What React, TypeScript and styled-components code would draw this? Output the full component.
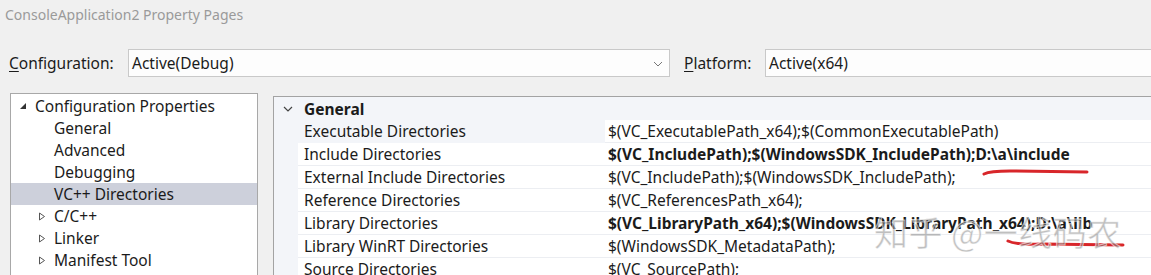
import React from "react";
import styled, { createGlobalStyle } from "styled-components";

type Prop = { name: string; value: string; bold?: boolean; plain?: boolean };

const treeItems = [
  { label: "General" },
  { label: "Advanced" },
  { label: "Debugging" },
  { label: "VC++ Directories", selected: true },
  { label: "C/C++", collapsed: true },
  { label: "Linker", collapsed: true },
  { label: "Manifest Tool", collapsed: true },
];

const props: Prop[] = [
  { name: "Executable Directories", value: "$(VC_ExecutablePath_x64);$(CommonExecutablePath)", plain: true },
  { name: "Include Directories", value: "$(VC_IncludePath);$(WindowsSDK_IncludePath);D:\\a\\include", bold: true },
  { name: "External Include Directories", value: "$(VC_IncludePath);$(WindowsSDK_IncludePath);" },
  { name: "Reference Directories", value: "$(VC_ReferencesPath_x64);" },
  { name: "Library Directories", value: "$(VC_LibraryPath_x64);$(WindowsSDK_LibraryPath_x64);D:\\a\\lib", bold: true },
  { name: "Library WinRT Directories", value: "$(WindowsSDK_MetadataPath);" },
  { name: "Source Directories", value: "$(VC_SourcePath);" },
];

const App = () => {
  return (
    <Window>
      <GlobalStyle />
      <Title>ConsoleApplication2 Property Pages</Title>

      <ConfigBar>
        <Label width={119}>
          <u>C</u>onfiguration:
        </Label>
        <Combo width={542}>
          Active(Debug)
          <ComboArrow viewBox="0 0 10 6">
            <polyline points="1,1 5,5 9,1" />
          </ComboArrow>
        </Combo>
        <Label width={81} style={{ marginLeft: 14 }}>
          <u>P</u>latform:
        </Label>
        <Combo width={400}>Active(x64)</Combo>
      </ConfigBar>

      <Body>
        <Tree>
          <TreeRow>
            <Twisty>
              <svg width="8" height="8" viewBox="0 0 8 8">
                <polygon points="7,1 7,7 1,7" fill="#333" />
              </svg>
            </Twisty>
            Configuration Properties
          </TreeRow>
          {treeItems.map((item) => (
            <TreeRow key={item.label} selected={item.selected} indent={19}>
              <Twisty>
                {item.collapsed && (
                  <svg width="8" height="9" viewBox="0 0 8 9">
                    <polygon points="1.5,1 6.5,4.5 1.5,8" fill="none" stroke="#555" strokeWidth="1" />
                  </svg>
                )}
              </Twisty>
              {item.label}
            </TreeRow>
          ))}
        </Tree>

        <Grid>
          <GroupHeader>
            <Chevron viewBox="0 0 10 6">
              <polyline points="1,1 5,5 9,1" />
            </Chevron>
            General
          </GroupHeader>
          {props.map((p) => (
            <PropRow key={p.name}>
              <NameCell plain={p.plain}>{p.name}</NameCell>
              <ValueCell bold={p.bold}>{p.value}</ValueCell>
            </PropRow>
          ))}
        </Grid>
      </Body>

      <Marks width="1151" height="275" viewBox="0 0 1151 275">
        <path d="M984 174 Q990 171 1010 171 L1087 172" stroke="#d8262a" strokeWidth="3" fill="none" strokeLinecap="round" />
        <path d="M1008 241 Q1016 245 1040 244 L1123 245" stroke="#d8262a" strokeWidth="3" fill="none" strokeLinecap="round" />
      </Marks>
      <Watermark>知乎 @一线码农</Watermark>
    </Window>
  );
};

// styles

const GlobalStyle = createGlobalStyle`
  body {
    margin: 0;
    background: #f0f0f0;
    font-family: "Noto Sans", "Noto Sans CJK SC", sans-serif;
  }
`;

const Window = styled.div`
  position: relative;
  width: 1151px;
  height: 275px;
  overflow: hidden;
  background: #f0f0f0;
  color: #1b1b1b;
  font-size: 15.5px;
`;

const Title = styled.div`
  height: 30px;
  line-height: 30px;
  padding-left: 5px;
  color: #9a9a9a;
  font-size: 14px;
`;

const ConfigBar = styled.div`
  display: flex;
  align-items: center;
  margin-top: 19px;
  padding-left: 9px;
  height: 28px;
`;

const Label = styled.div<{ width: number }>`
  width: ${(p) => p.width}px;
  flex: none;
  font-size: 15.5px;
  u {
    text-decoration-thickness: 1px;
    text-underline-offset: 2px;
  }
`;

const Combo = styled.div<{ width: number }>`
  position: relative;
  flex: none;
  box-sizing: border-box;
  width: ${(p) => p.width}px;
  height: 28px;
  line-height: 26px;
  padding-left: 3px;
  background: #fdfdfd;
  border: 1px solid #c9c9c9;
  font-size: 15.5px;
`;

const ComboArrow = styled.svg`
  position: absolute;
  right: 6px;
  top: 11px;
  width: 10px;
  height: 6px;
  fill: none;
  stroke: #777;
  stroke-width: 1;
`;

const Body = styled.div`
  display: flex;
  align-items: flex-start;
  gap: 15px;
  margin-top: 16px;
  padding-left: 10px;
`;

const Tree = styled.div`
  flex: none;
  box-sizing: border-box;
  width: 248px;
  height: 200px;
  padding-top: 1px;
  background: #fff;
  border: 1px solid #a8a8a8;
`;

const TreeRow = styled.div<{ selected?: boolean; indent?: number }>`
  display: flex;
  align-items: center;
  height: 22px;
  padding-left: ${(p) => 4 + (p.indent || 0)}px;
  background: ${(p) => (p.selected ? "#cdd0db" : "transparent")};
  white-space: nowrap;
`;

const Twisty = styled.span`
  display: inline-flex;
  align-items: center;
  justify-content: center;
  width: 15px;
  height: 22px;
  margin-right: 5px;
`;

const Grid = styled.div`
  flex: 1;
  height: 200px;
  margin-top: 3px;
  background: #f3f5f9;
  border-top: 1px solid #a3a3a3;
  border-left: 1px solid #a3a3a3;
`;

const GroupHeader = styled.div`
  display: flex;
  align-items: center;
  height: 23px;
  padding-left: 9px;
  font-weight: 700;
`;

const Chevron = styled.svg`
  width: 10px;
  height: 6px;
  margin-right: 11px;
  fill: none;
  stroke: #444;
  stroke-width: 1.2;
`;

const PropRow = styled.div`
  display: grid;
  grid-template-columns: 307px 1fr;
  height: 23px;
  margin-left: 24px;
`;

const NameCell = styled.div<{ plain?: boolean }>`
  padding-left: 6px;
  line-height: 22px;
  background: ${(p) => (p.plain ? "transparent" : "#fff")};
  border-bottom: 1px solid ${(p) => (p.plain ? "transparent" : "#eceef2")};
  white-space: nowrap;
`;

const ValueCell = styled.div<{ bold?: boolean }>`
  padding-left: 3px;
  line-height: 22px;
  background: #fff;
  border-bottom: 1px solid #eceef2;
  font-weight: ${(p) => (p.bold ? 700 : 400)};
  white-space: nowrap;
`;

const Marks = styled.svg`
  position: absolute;
  left: 0;
  top: 0;
  pointer-events: none;
`;

const Watermark = styled.div`
  position: absolute;
  left: 874px;
  top: 207px;
  font-family: "Noto Sans CJK SC", sans-serif;
  font-size: 34px;
  letter-spacing: 0.5px;
  color: rgba(135, 135, 135, 0.55);
  -webkit-text-stroke: 1px rgba(255, 255, 255, 0.6);
  white-space: nowrap;
  pointer-events: none;
`;

export default App;
